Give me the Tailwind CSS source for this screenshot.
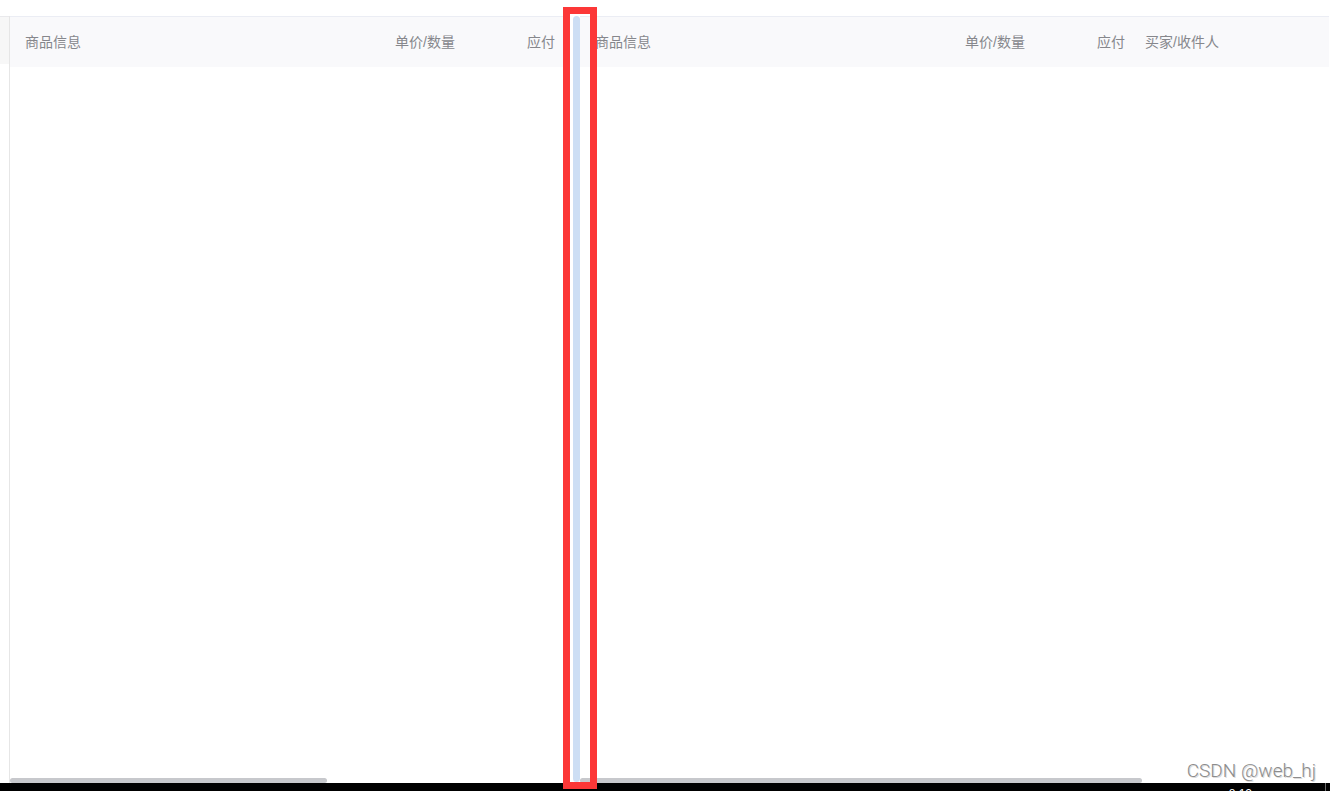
<!DOCTYPE html>
<html lang="zh-CN">
<head>
  <meta charset="UTF-8" />
  <meta name="viewport" content="width=device-width, initial-scale=1.0" />
  <title>订单列表</title>
  <script src="https://cdn.jsdelivr.net/npm/@tailwindcss/browser@4"></script>
</head>
<body class="h-screen flex flex-col overflow-hidden bg-white pt-4 font-['Liberation_Sans','Noto_Sans_CJK_SC',sans-serif] text-sm text-[#86878c]">

  <main class="flex-1 min-h-0 flex pr-px">
    <!-- side column -->
    <aside class="w-[10px] shrink-0 border-r border-[#e6e6e6]">
      <div class="h-12 bg-[#f7f7f7] border-t border-[#e9e9ec]"></div>
    </aside>

    <!-- left pane -->
    <section class="w-[560px] shrink-0 flex flex-col justify-between">
      <table class="w-full table-fixed text-left">
        <thead>
          <tr class="h-[50px] bg-[#f9f9fb] border-t border-[#ebedf4]">
            <th class="w-[370px] pl-[15px] font-normal">商品信息</th>
            <th class="w-[110px] pl-[15px] font-normal">单价/数量</th>
            <th class="pr-[15px] text-right font-normal">应付</th>
          </tr>
        </thead>
      </table>
      <div class="w-[317px] h-[5px] rounded-full bg-[#c7c8cc]"></div>
    </section>

    <!-- drag bar -->
    <div class="relative w-[10px] shrink-0 pl-[3px] pb-px">
      <div class="h-full rounded-full bg-[#cddef4]"></div>
      <div class="absolute -left-[7px] -right-[17px] -top-[9px] -bottom-[6px] z-10 border-7 border-[#fc3737]"></div>
    </div>

    <!-- right pane -->
    <section class="flex-1 min-w-0 flex flex-col justify-between">
      <table class="w-full table-fixed text-left">
        <thead>
          <tr class="h-[50px] bg-[#f9f9fb] border-t border-[#ebedf4]">
            <th class="w-[370px] pl-[15px] font-normal">商品信息</th>
            <th class="w-[110px] pl-[15px] font-normal">单价/数量</th>
            <th class="w-[75px] pr-[10px] text-right font-normal">应付</th>
            <th class="pl-[10px] font-normal">买家/收件人</th>
          </tr>
        </thead>
      </table>
      <div class="w-3/4 h-[5px] rounded-full bg-[#c7c8cc]"></div>
    </section>
  </main>

  <!-- taskbar -->
  <footer class="h-2 shrink-0 flex justify-end bg-black pr-1 overflow-hidden">
    <span class="h-5 pt-[3px] pr-[73px] border-r border-[#6b6b6b] text-xs leading-4 text-white">8:12</span>
  </footer>

  <div class="absolute right-[14px] bottom-2 text-[19px] leading-6 font-['Roboto',sans-serif] font-light text-[#8c8c8c] [text-shadow:1px_1px_0_#dcdcdc]">CSDN @web_hj</div>

</body>
</html>
